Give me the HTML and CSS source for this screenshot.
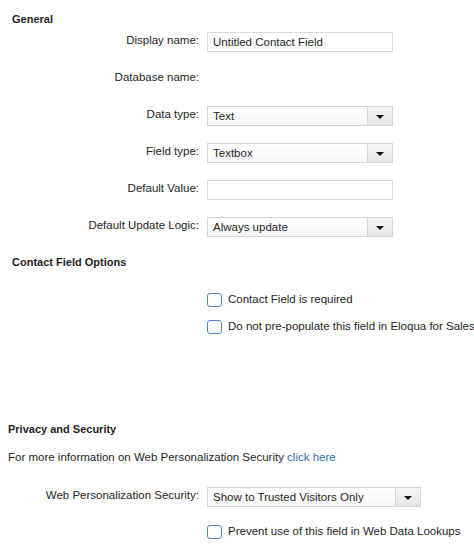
FILE: index.html
```html
<!DOCTYPE html>
<html>
<head>
<meta charset="utf-8">
<link rel="stylesheet" href="styles.css">
</head>
<body>
<div class="page">
  <h2 class="heading heading-indent">General</h2>
  <div class="form">
    <div class="row">
      <div class="lbl">Display name:</div>
      <div class="field">Untitled Contact Field</div>
    </div>
    <div class="row">
      <div class="lbl">Database name:</div>
    </div>
    <div class="row">
      <div class="lbl">Data type:</div>
      <div class="select"><div class="select-value">Text</div><div class="select-btn"><span class="arrow"></span></div></div>
    </div>
    <div class="row">
      <div class="lbl">Field type:</div>
      <div class="select"><div class="select-value">Textbox</div><div class="select-btn"><span class="arrow"></span></div></div>
    </div>
    <div class="row">
      <div class="lbl">Default Value:</div>
      <div class="field"></div>
    </div>
    <div class="row">
      <div class="lbl">Default Update Logic:</div>
      <div class="select"><div class="select-value">Always update</div><div class="select-btn"><span class="arrow"></span></div></div>
    </div>
  </div>

  <h2 class="heading heading-indent section-options">Contact Field Options</h2>
  <div class="checks">
    <div class="check"><span class="box"></span><span class="check-text">Contact Field is required</span></div>
    <div class="check"><span class="box"></span><span class="check-text">Do not pre-populate this field in Eloqua for Sales</span></div>
  </div>

  <h2 class="heading heading-flush section-privacy">Privacy and Security</h2>
  <p class="info">For more information on Web Personalization Security <a class="link" href="#">click here</a></p>
  <div class="row row-web">
    <div class="lbl">Web Personalization Security:</div>
    <div class="select select-wide"><div class="select-value">Show to Trusted Visitors Only</div><div class="select-btn"><span class="arrow"></span></div></div>
  </div>
  <div class="checks checks-web">
    <div class="check"><span class="box"></span><span class="check-text">Prevent use of this field in Web Data Lookups</span></div>
  </div>
</div>
</body>
</html>
```
FILE: styles.css
```css
html, body {
  margin: 0;
  padding: 0;
  background: #ffffff;
}

body {
  font-family: "Liberation Sans", Arial, sans-serif;
  font-size: 11.5px;
  color: #262626;
  overflow: hidden;
}

.page {
  padding-top: 12px;
}

.heading {
  margin: 0;
  font-size: 11px;
  font-weight: bold;
  line-height: 14px;
  color: #1e1e1e;
}

.heading-indent {
  padding-left: 12px;
}

.heading-flush {
  padding-left: 8px;
}

.form {
  margin-top: 6px;
  display: flex;
  flex-direction: column;
  gap: 17px;
}

.row {
  display: flex;
  align-items: flex-start;
  gap: 8px;
  height: 20px;
}

.lbl {
  width: 199px;
  flex: none;
  text-align: right;
  line-height: 16px;
  white-space: nowrap;
}

.field {
  width: 186px;
  height: 20px;
  box-sizing: border-box;
  border: 1px solid #dadada;
  padding: 0 5px;
  line-height: 18px;
  background: #ffffff;
  white-space: nowrap;
}

.select {
  width: 186px;
  height: 20px;
  box-sizing: border-box;
  border: 1px solid #d6d6d6;
  display: flex;
  background: linear-gradient(#ffffff, #f7f7f7);
}

.select-wide {
  width: 214px;
}

.select-value {
  flex: 1;
  padding: 0 5px;
  line-height: 18px;
  white-space: nowrap;
  overflow: hidden;
}

.select-btn {
  width: 24px;
  flex: none;
  border-left: 1px solid #d6d6d6;
  background: linear-gradient(#f5f5f5, #e6e6e6);
  display: flex;
  align-items: center;
  justify-content: center;
}

.arrow {
  width: 0;
  height: 0;
  border-left: 4px solid transparent;
  border-right: 4px solid transparent;
  border-top: 4px solid #111111;
  margin-top: 1px;
}

.section-options {
  margin-top: 18px;
}

.checks {
  margin-top: 23px;
  padding-left: 207px;
  display: flex;
  flex-direction: column;
  gap: 12px;
}

.check {
  display: flex;
  align-items: center;
  height: 15px;
  white-space: nowrap;
}

.box {
  width: 15px;
  height: 14px;
  box-sizing: border-box;
  border: 1px solid #4f82c2;
  border-radius: 3px;
  background: #ffffff;
  flex: none;
  margin-right: 6px;
}

.check-text {
  line-height: 15px;
}

.section-privacy {
  margin-top: 88px;
}

.info {
  margin: 14px 0 0 0;
  padding-left: 8px;
  line-height: 14px;
  white-space: nowrap;
}

.link {
  color: #2c6db3;
  text-decoration: none;
}

.row-web {
  margin-top: 23px;
}

.checks-web {
  margin-top: 17px;
}
```
